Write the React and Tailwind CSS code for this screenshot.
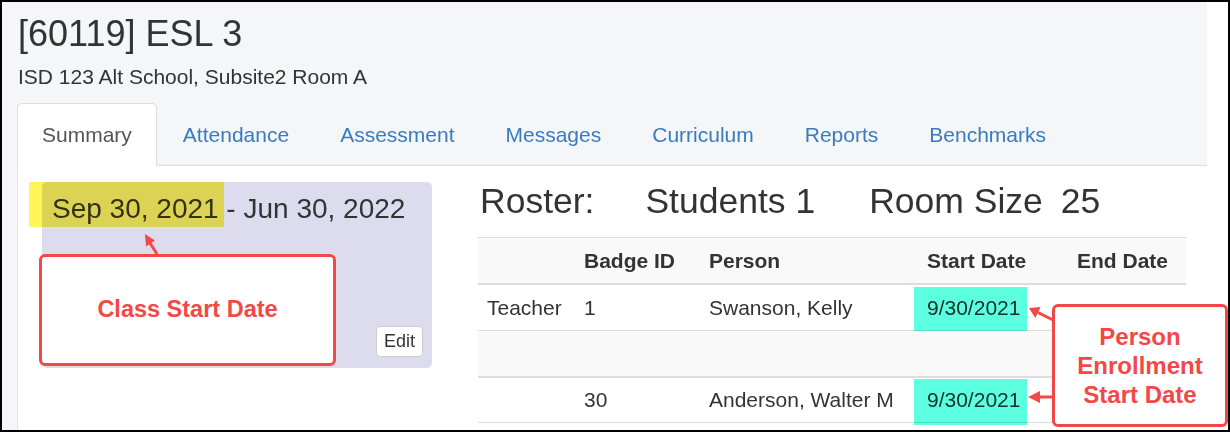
import React from 'react';

const tabs = ['Summary', 'Attendance', 'Assessment', 'Messages', 'Curriculum', 'Reports', 'Benchmarks'];

const rows = [
  { role: 'Teacher', badge: '1', person: 'Swanson, Kelly', start: '9/30/2021', end: '', h: 'h-[46px]', border: 'border-b', bg: 'bg-white' },
  { role: '', badge: '', person: '', start: '', end: '', h: 'h-[47px]', border: 'border-b-2', bg: 'bg-[#f9f9f9]' },
  { role: '', badge: '30', person: 'Anderson, Walter M', start: '9/30/2021', end: '', h: 'h-[45px]', border: 'border-b', bg: 'bg-white' },
];

const cols = 'grid grid-cols-[96px_125px_218px_150px_119px]';

function App() {
  return (
    <div className="relative w-[1230px] h-[432px] overflow-hidden bg-white font-['Liberation_Sans',Arial,sans-serif] text-[#333]">
      <div className="pt-[2px] pl-[2px] h-full">
        <div className="w-[1205px] h-full bg-[#f4f6f8] pl-[15px] flex flex-col">
          <h1 className="pl-px pt-[13px] text-[36px] leading-[38px]">[60119] ESL 3</h1>
          <p className="pl-px mt-[12px] text-[21px] leading-[24px]">ISD 123 Alt School, Subsite2 Room A</p>

          <ul className="mt-[14px] flex border-b border-[#dddddd]">
            {tabs.map((t, i) => (
              <li
                key={t}
                className={
                  i === 0
                    ? '-mb-px mr-px pl-[24px] pr-[24px] pt-[19px] pb-[18px] border border-[#dddddd] border-b-transparent rounded-t-[5px] bg-white text-[21px] leading-[24px] text-[#555]'
                    : '-mb-px mr-px pl-[24px] pr-[24px] pt-[19px] pb-[18px] border border-transparent text-[21px] leading-[24px] text-[#3a7bbf]'
                }
              >
                {t}
              </li>
            ))}
          </ul>

          <div className="flex-1 bg-white border-l border-[#e4e7ea] pl-[24px] pt-[16px] flex">
            <div className="w-[390px] h-[186px] bg-[#dcdcee] rounded-[5px] flex flex-col">
              <div className="pl-[10px] pt-[11px] text-[28px] leading-[31px]">Sep 30, 2021 - Jun 30, 2022</div>
              <button className="mt-auto self-end mr-[9px] mb-[11px] w-[47px] h-[31px] bg-white border border-[#cccccc] rounded-[4px] text-[18px] text-[#333]">
                Edit
              </button>
            </div>

            <div className="ml-[46px] w-[708px]">
              <div className="pl-[2px] text-[35.5px] leading-[38px] flex">
                <span>Roster:</span>
                <span className="ml-[51px]">Students 1</span>
                <span className="ml-[54px]">Room Size</span>
                <span className="ml-[18px]">25</span>
              </div>

              <div className="mt-[17px] border-t border-[#dddddd] text-[21px]">
                <div className={`${cols} h-[47px] items-center bg-[#f9f9f9] border-b-2 border-[#dddddd] font-bold`}>
                  <div className="pl-[10px]"></div>
                  <div className="pl-[10px]">Badge ID</div>
                  <div className="pl-[10px]">Person</div>
                  <div className="pl-[10px]">Start Date</div>
                  <div className="pl-[10px]">End Date</div>
                </div>
                {rows.map((r, i) => (
                  <div key={i} className={`${cols} ${r.h} ${r.border} ${r.bg} items-center border-[#dddddd]`}>
                    <div className="pl-[9px]">{r.role}</div>
                    <div className="pl-[10px]">{r.badge}</div>
                    <div className="pl-[10px]">{r.person}</div>
                    <div className="pl-[10px]">{r.start}</div>
                    <div className="pl-[10px]">{r.end}</div>
                  </div>
                ))}
              </div>
            </div>
          </div>
        </div>
      </div>

      {/* highlights */}
      <div className="absolute left-[29px] top-[182px] w-[195px] h-[45px] bg-[#fff55a] mix-blend-multiply pointer-events-none" />
      <div className="absolute left-[914px] top-[287px] w-[113px] h-[44px] bg-[#5cffe0] mix-blend-multiply pointer-events-none" />
      <div className="absolute left-[914px] top-[379px] w-[113px] h-[46px] bg-[#5cffe0] mix-blend-multiply pointer-events-none" />

      {/* callouts */}
      <div className="absolute left-[39px] top-[254px] w-[297px] h-[112px] bg-white border-[3px] border-[#f24848] rounded-[6px] flex items-center justify-center text-[23.5px] font-bold text-[#f24848]">
        Class Start Date
      </div>
      <div className="absolute left-[1052px] top-[304px] w-[176px] h-[123px] bg-white border-[3px] border-[#f24848] rounded-[6px] flex flex-col items-center justify-center text-[24px] leading-[29px] font-bold text-[#f24848]">
        <span>Person</span>
        <span>Enrollment</span>
        <span>Start Date</span>
      </div>

      <svg className="absolute inset-0 pointer-events-none" width="1230" height="432">
        <line x1="157" y1="254" x2="150" y2="243" stroke="#f24848" strokeWidth="3" />
        <polygon points="145,234 155,240.5 146,246.5" fill="#f24848" />
        <line x1="1053" y1="320" x2="1038" y2="312.5" stroke="#f24848" strokeWidth="3" />
        <polygon points="1029,308 1040.6,307 1035.3,318" fill="#f24848" />
        <line x1="1053" y1="397" x2="1038" y2="397" stroke="#f24848" strokeWidth="3" />
        <polygon points="1028,397 1040,391 1040,403" fill="#f24848" />
      </svg>

      <div className="absolute inset-0 border-2 border-black pointer-events-none" />
    </div>
  );
}

export default App;
